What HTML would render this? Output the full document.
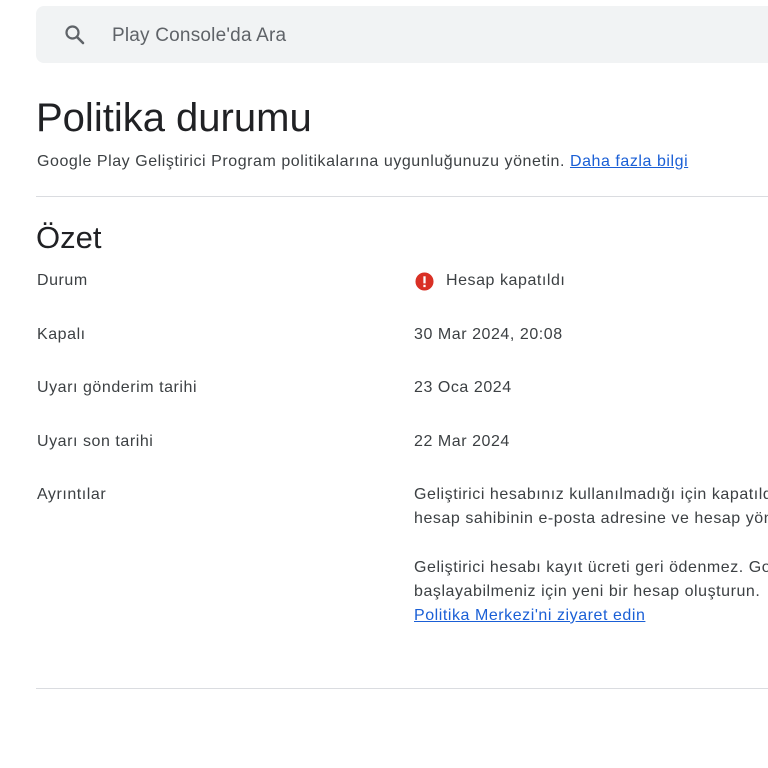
<!DOCTYPE html><html><head><meta charset="utf-8"><style>
html,body{margin:0;width:768px;height:768px;overflow:hidden;background:#fff;font-family:"Liberation Sans",sans-serif;}
#w{position:absolute;left:0;top:0;width:768px;height:768px;overflow:hidden;}
.a{position:absolute;white-space:nowrap;line-height:1;}
.l{font-size:16px;color:#3c4043;letter-spacing:.55px;}
a{color:#1a5fd6;text-decoration:underline;}
</style></head><body><div id="w">
<div style="position:absolute;left:36px;top:6px;width:732px;height:57px;background:#f1f3f4;border-radius:8px 0 0 8px"></div>
<svg style="position:absolute;left:63px;top:23px" width="24" height="24" viewBox="0 0 24 24"><circle cx="9.5" cy="9.5" r="6" fill="none" stroke="#5f6368" stroke-width="2.2"/><path d="M14 14l6 6" stroke="#5f6368" stroke-width="2.6" stroke-linecap="round"/></svg>
<div class="a" style="left:112px;top:26px;font-size:19px;color:#5f6368;letter-spacing:.2px">Play Console'da Ara</div>
<div class="a" style="left:36px;top:98px;font-size:40px;color:#202124">Politika durumu</div>
<div class="a l" style="left:37px;top:154px">Google Play Geliştirici Program politikalarına uygunluğunuzu yönetin. <a>Daha fazla bilgi</a></div>
<div style="position:absolute;left:36px;top:196px;width:732px;height:1px;background:#dadce0"></div>
<div class="a" style="left:36px;top:222px;font-size:31px;color:#202124">Özet</div>
<div class="a l" style="left:37px;top:273px">Durum</div>
<div class="a l" style="left:37px;top:327px">Kapalı</div>
<div class="a l" style="left:37px;top:380px">Uyarı gönderim tarihi</div>
<div class="a l" style="left:37px;top:434px">Uyarı son tarihi</div>
<div class="a l" style="left:37px;top:487px">Ayrıntılar</div>
<svg style="position:absolute;left:415px;top:272px" width="19" height="19" viewBox="0 0 20 20"><circle cx="10" cy="10" r="9.5" fill="#d93025"/><rect x="8.8" y="4.5" width="2.4" height="7.5" fill="#fff"/><rect x="8.8" y="13.5" width="2.4" height="2.4" fill="#fff"/></svg>
<div class="a l" style="left:446px;top:273px">Hesap kapatıldı</div>
<div class="a l" style="left:414px;top:327px">30 Mar 2024, 20:08</div>
<div class="a l" style="left:414px;top:380px">23 Oca 2024</div>
<div class="a l" style="left:414px;top:434px">22 Mar 2024</div>
<div class="a l" style="left:414px;top:487px">Geliştirici hesabınız kullanılmadığı için kapatıldı.</div>
<div class="a l" style="left:414px;top:511px">hesap sahibinin e-posta adresine ve hesap yönetici</div>
<div class="a l" style="left:414px;top:560px">Geliştirici hesabı kayıt ücreti geri ödenmez. Google</div>
<div class="a l" style="left:414px;top:584px">başlayabilmeniz için yeni bir hesap oluşturun.</div>
<div class="a l" style="left:414px;top:608px"><a>Politika Merkezi'ni ziyaret edin</a></div>
<div style="position:absolute;left:36px;top:688px;width:732px;height:1px;background:#dadce0"></div>
</div></body></html>
